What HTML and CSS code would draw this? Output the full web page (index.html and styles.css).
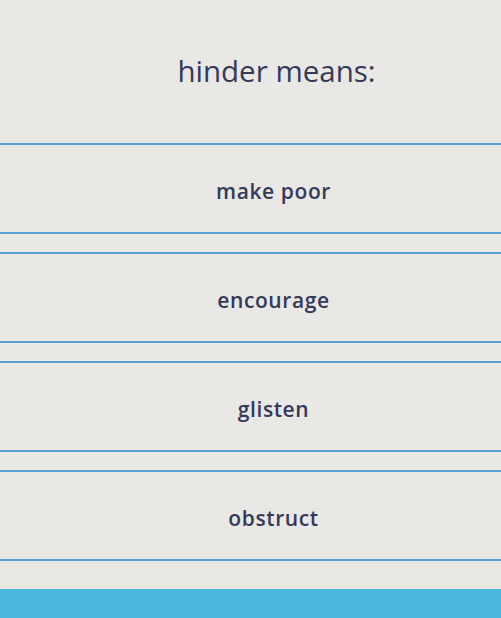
FILE: index.html
```html
<!DOCTYPE html>
<html lang="en">
<head>
    <meta charset="UTF-8">
    <meta name="viewport" content="width=device-width, initial-scale=1.0">
    <title>Vocabulary quiz</title>
    <link rel="stylesheet" href="styles.css">
</head>
<body>
    <div class="quiz">
        <h1 class="question">hinder means:</h1>
        <ul class="choices">
            <li class="choice">make poor</li>
            <li class="choice">encourage</li>
            <li class="choice">glisten</li>
            <li class="choice">obstruct</li>
        </ul>
    </div>
    <div class="footer-bar"></div>
</body>
</html>
```

FILE: styles.css
```css
body {
    font-family: "Open Sans", "Noto Sans", Arial, sans-serif;
    background-color: #e9e8e5;
    color: #35395a;
    margin: 0;
    padding: 0;
    height: 618px;
    display: flex;
    flex-direction: column;
    overflow: hidden;
}

.quiz {
    flex: 1;
}

.question {
    font-size: 29.5px;
    font-weight: 400;
    text-align: center;
    margin: 0;
    padding: 52px 0 0 52px;
    height: 91px;
    line-height: 38px;
}

.choices {
    list-style-type: none;
    margin: 0;
    padding: 0;
    display: flex;
    flex-direction: column;
    gap: 18px;
}

.choice {
    height: 87px;
    display: flex;
    align-items: center;
    justify-content: center;
    padding: 4px 0 0 46px;
    box-sizing: border-box;
    height: 91px;
    border-top: 2px solid #5b9fcf;
    border-bottom: 2px solid #5b9fcf;
    font-size: 21px;
    font-weight: 600;
    letter-spacing: 0.6px;
}

.footer-bar {
    height: 29px;
    background-color: #4db6de;
}
```
